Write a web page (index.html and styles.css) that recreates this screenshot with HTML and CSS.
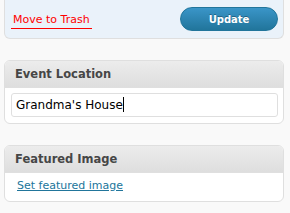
FILE: index.html
```html
<!DOCTYPE html>
<html lang="en">

<head>
    <meta charset="UTF-8">
    <title>Edit Event</title>
    <link rel="stylesheet" href="styles.css">
</head>

<body>
    <div class="publish-actions">
        <a class="delete" href="#">Move to Trash</a>
        <button class="primary" type="button">Update</button>
    </div>

    <div class="postbox">
        <h3>Event Location</h3>
        <div class="inside">
            <div class="text-field">Grandma's House<span class="caret"></span></div>
        </div>
    </div>

    <div class="postbox">
        <h3>Featured Image</h3>
        <div class="inside">
            <a class="thumb-link" href="#">Set featured image</a>
        </div>
    </div>
</body>

</html>
```

FILE: styles.css
```css
body {
    margin: 0;
    padding: 0 6px 0 4px;
    font-family: "DejaVu Sans", sans-serif;
    background: #f9f9f9;
    color: #333;
}

.publish-actions {
    display: flex;
    justify-content: space-between;
    align-items: center;
    height: 38px;
    padding: 0 5px 0 6px;
    background-color: #eaf2fa;
    border: 1px solid #dfdfdf;
    border-top: none;
    border-radius: 0 0 6px 6px;
}

.delete {
    color: #f00;
    font-size: 11px;
    text-decoration: none;
    padding: 0 2px 2px;
    border-bottom: 1px solid #f00;
    margin-top: 4px;
}

.primary {
    width: 98px;
    height: 24px;
    border: 1px solid #21759b;
    border-radius: 12px;
    background: linear-gradient(#3a95c8, #21759b);
    color: #fff;
    font-family: "DejaVu Sans", sans-serif;
    font-weight: bold;
    font-size: 10px;
    text-shadow: 0 -1px 0 rgba(0, 0, 0, 0.3);
    padding: 0;
}

.postbox {
    margin-top: 21px;
    background-color: #fff;
    border: 1px solid #dfdfdf;
    border-radius: 6px;
    overflow: hidden;
}

.postbox h3 {
    margin: 0;
    height: 26px;
    line-height: 27px;
    padding: 0 10px;
    font-size: 11.5px;
    color: #464646;
    background: linear-gradient(#ececec, #dedede);
    border-bottom: 1px solid #dfdfdf;
}

.inside {
    padding: 5px 5px 6px 6px;
}

.text-field {
    height: 22px;
    line-height: 22px;
    border: 1px solid #dfdfdf;
    border-radius: 3px;
    padding: 0 4px;
    font-size: 12px;
    color: #000;
}

.caret {
    display: inline-block;
    width: 1px;
    height: 15px;
    background: #000;
    vertical-align: -3px;
}

.thumb-link {
    display: block;
    width: fit-content;
    margin: 1px 0 2px 6px;
    font-size: 11px;
    line-height: 14px;
    color: #21759b;
}
```
